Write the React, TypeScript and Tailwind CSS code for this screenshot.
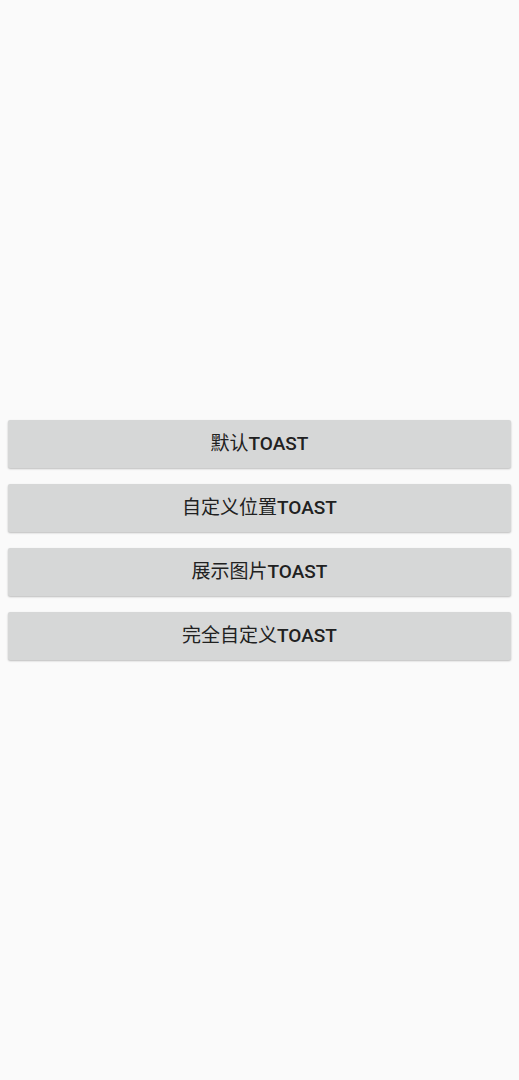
export default function App() {
  const items = ["默认", "自定义位置", "展示图片", "完全自定义"];
  return (
    <div className="min-h-[1080px] w-full bg-[#fafafa] flex flex-col justify-center px-2 gap-4" style={{ fontFamily: 'Roboto, "Noto Sans CJK SC", sans-serif' }}>
      {items.map((t) => (
        <div key={t} className="h-12 w-full rounded-[2px] bg-[#d6d7d7] shadow-[0_1px_2px_rgba(0,0,0,0.25)] flex items-center justify-center text-[19px] text-[#212121]">
          <span className="font-normal">{t}</span>
          <span className="font-medium">TOAST</span>
        </div>
      ))}
    </div>
  );
}
